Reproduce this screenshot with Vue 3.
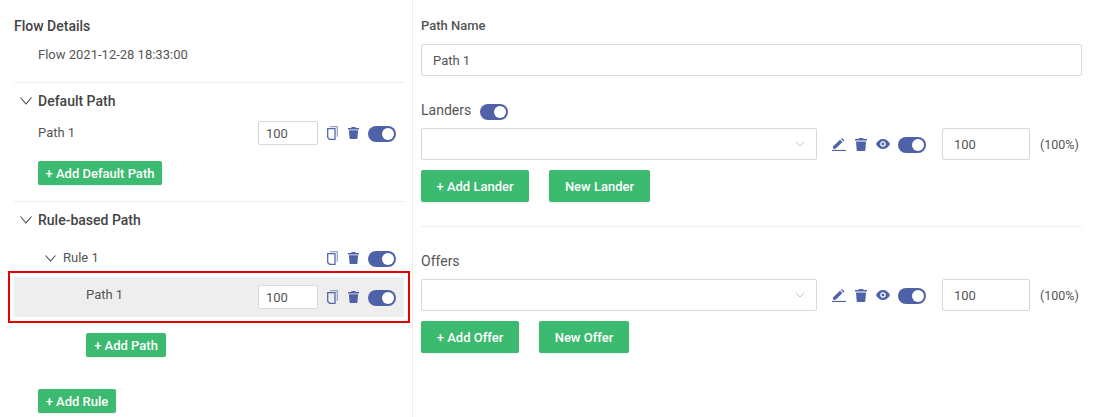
<template>
  <div class="page">
    <!-- left column: flow tree -->
    <div class="side">
      <div class="flow-title">Flow Details</div>
      <div class="flow-name">Flow 2021-12-28 18:33:00</div>

      <div class="section first">
        <div class="sec-head">
          <svg class="chev" width="12" height="8" viewBox="0 0 12 8"><path d="M.5.5L6 7l5.500-6.500" /></svg>
          <span>Default Path</span>
        </div>
        <div class="row path-row">
          <span class="label">Path 1</span>
          <input class="num" value="100" />
          <svg class="ico copy" width="11" height="14" viewBox="0 0 11 14">
            <path class="back" d="M3 .7h7.300v10" />
            <path d="M.7 2.600h7.300v10.700H2.600L.7 11.400z" />
          </svg>
          <svg class="ico" width="11" height="12" viewBox="0 0 12 13">
            <path class="fill" d="M4 0h4l.6 1H12v1.600H0V1h3.400zM1 3.600h10l-.7 8.600q-.1.800-1 .8H2.700q-.9 0-1-.8z" />
          </svg>
          <span class="switch"><i></i></span>
        </div>
        <button class="btn small add-default">+ Add Default Path</button>
      </div>

      <div class="section">
        <div class="sec-head">
          <svg class="chev" width="12" height="8" viewBox="0 0 12 8"><path d="M.5.5L6 7l5.500-6.500" /></svg>
          <span>Rule-based Path</span>
        </div>
        <div class="row rule-row">
          <svg class="chev small-chev" width="11" height="7" viewBox="0 0 11 7"><path d="M.5.5L5.500 6l5-5.500" /></svg>
          <span class="label">Rule 1</span>
          <svg class="ico copy" width="11" height="14" viewBox="0 0 11 14">
            <path class="back" d="M3 .7h7.300v10" />
            <path d="M.7 2.600h7.300v10.700H2.600L.7 11.400z" />
          </svg>
          <svg class="ico" width="11" height="12" viewBox="0 0 12 13">
            <path class="fill" d="M4 0h4l.6 1H12v1.600H0V1h3.400zM1 3.600h10l-.7 8.600q-.1.800-1 .8H2.700q-.9 0-1-.8z" />
          </svg>
          <span class="switch"><i></i></span>
        </div>
        <div class="row selected">
          <span class="label">Path 1</span>
          <input class="num" value="100" />
          <svg class="ico copy" width="11" height="14" viewBox="0 0 11 14">
            <path class="back" d="M3 .7h7.300v10" />
            <path d="M.7 2.600h7.300v10.700H2.600L.7 11.400z" />
          </svg>
          <svg class="ico" width="11" height="12" viewBox="0 0 12 13">
            <path class="fill" d="M4 0h4l.6 1H12v1.600H0V1h3.400zM1 3.600h10l-.7 8.600q-.1.800-1 .8H2.700q-.9 0-1-.8z" />
          </svg>
          <span class="switch"><i></i></span>
        </div>
        <button class="btn small add-path">+ Add Path</button>
        <button class="btn small add-rule">+ Add Rule</button>
      </div>
    </div>

    <!-- right column: path form -->
    <div class="main">
      <div class="field-title">Path Name</div>
      <input class="text" value="Path 1" />

      <div v-for="g in groups" :key="g.name" class="group" :class="g.cls">
        <div class="group-head">
          <span>{{ g.name }}</span>
          <span v-if="g.toggle" class="switch"><i></i></span>
        </div>
        <div class="pick-row">
          <div class="select">
            <svg width="10" height="6" viewBox="0 0 10 6"><path d="M.7.7L5 5l4.300-4.300" /></svg>
          </div>
          <svg class="ico pencil" width="14" height="13" viewBox="0 0 14 13">
            <path class="fill" d="M1 10.800V8.400L8 1.700l2.500 2.400-6.900 6.700zM9 .9L10 0l2.500 2.400-1 1z" />
            <path class="fill" d="M0 11.900h14V13H0z" />
          </svg>
          <svg class="ico" width="12" height="13" viewBox="0 0 12 13">
            <path class="fill" d="M4 0h4l.6 1H12v1.600H0V1h3.400zM1 3.600h10l-.7 8.600q-.1.800-1 .8H2.700q-.9 0-1-.8z" />
          </svg>
          <svg class="ico eye" width="14" height="10" viewBox="0 0 14 10">
            <path class="fill" fill-rule="evenodd" d="M7 0c3.200 0 5.700 2.100 7 5-1.300 2.900-3.800 5-7 5S1.300 7.900 0 5c1.300-2.900 3.800-5 7-5zm0 2.300a2.700 2.700 0 100 5.400 2.700 2.700 0 000-5.400zM7 3.600a1.400 1.400 0 110 2.800 1.400 1.400 0 010-2.800z" />
          </svg>
          <span class="switch"><i></i></span>
          <input class="weight" value="100" />
          <span class="pct">(100%)</span>
        </div>
        <div class="btns">
          <button class="btn" :style="{ width: g.addW + 'px' }">{{ g.add }}</button>
          <button class="btn" :style="{ width: g.newW + 'px' }">{{ g.create }}</button>
        </div>
      </div>
    </div>
  </div>
</template>

<script setup>
const groups = [
  { name: "Landers", cls: "landers", toggle: true, add: "+ Add Lander", create: "New Lander", addW: 108, newW: 101 },
  { name: "Offers", cls: "offers", toggle: false, add: "+ Add Offer", create: "New Offer", addW: 98, newW: 90 },
];
</script>

<style>
html,
body {
  margin: 0;
  background: #fff;
  overflow: hidden;
}
</style>

<style scoped>
.page {
  display: flex;
  width: 1095px;
  height: 417px;
  overflow: hidden;
  font-family: Roboto, "Liberation Sans", sans-serif;
  font-size: 13px;
  color: #555;
}
.side {
  box-sizing: border-box;
  width: 413px;
  height: 417px;
  padding: 0 8px 0 14px;
  border-right: 1px solid #eee;
}
.flow-title {
  margin-top: 18px;
  height: 16px;
  line-height: 16px;
  font-size: 14px;
  font-weight: 500;
  color: #444;
}
.flow-name {
  margin: 13px 0 0 24px;
  height: 16px;
  line-height: 16px;
}
.section {
  border-top: 1px solid #eee;
}
.section.first {
  margin-top: 19px;
  height: 118px;
}
.sec-head {
  display: flex;
  align-items: center;
  height: 16px;
  padding-top: 10px;
  line-height: 16px;
  font-size: 14px;
  font-weight: 500;
  color: #444;
}
.chev {
  margin: 0 6px 0 6px;
}
.chev path {
  fill: none;
  stroke: #444;
  stroke-width: 1.1;
}
.row {
  display: flex;
  align-items: center;
}
.path-row {
  height: 24px;
  margin-top: 12px;
  padding: 0 8px 0 24px;
}
.label {
  flex: 1;
  position: relative;
  top: -1px;
}
.num {
  box-sizing: border-box;
  width: 60px;
  height: 24px;
  padding: 0 7px;
  border: 1px solid #d9d9d9;
  border-radius: 2px;
  background: #fff;
  font: 13px Roboto, sans-serif;
  color: #555;
  outline: none;
}
.ico {
  flex: none;
}
.ico path {
  fill: none;
  stroke: #5668ab;
  stroke-width: 1.3;
}
.ico path.back {
  stroke: #98a4d0;
}
.ico path.fill {
  fill: #4f62a8;
  stroke: none;
}
.copy {
  margin-left: 9px;
  margin-right: 10px;
}
.switch {
  flex: none;
  position: relative;
  display: inline-block;
  width: 28px;
  height: 16px;
  margin-left: 9px;
  border-radius: 8px;
  background: #4f62a8;
}
.row .switch,
.pick-row .switch {
  top: 1px;
}
.switch i {
  position: absolute;
  top: 2px;
  right: 2px;
  width: 12px;
  height: 12px;
  border-radius: 50%;
  background: #fff;
}
.btn {
  display: block;
  box-sizing: border-box;
  height: 32px;
  padding: 0;
  border: 0;
  border-radius: 2px;
  background: #3cba6f;
  box-shadow: 0 1px 2px rgba(0, 0, 0, 0.08);
  font: 500 13px Roboto, sans-serif;
  color: #fff;
}
.btn.small {
  height: 24px;
}
.add-default {
  width: 124px;
  margin: 16px 0 0 24px;
}
.rule-row {
  height: 16px;
  margin-top: 22px;
  padding: 0 8px 0 24px;
}
.small-chev {
  margin: 0 7px 0 7px;
}
.rule-row .copy {
  margin-left: 0;
}
.selected {
  height: 40px;
  margin-top: 11px;
  padding: 0 8px 0 72px;
  background: #eee;
  outline: 2px solid #e60000;
  outline-offset: 4px;
}
.selected .label {
  top: -3px;
}
.add-path {
  width: 80px;
  margin: 16px 0 0 72px;
}
.add-rule {
  width: 78px;
  margin: 32px 0 0 24px;
}
.main {
  box-sizing: border-box;
  width: 669px;
  padding-left: 8px;
}
.field-title {
  margin-top: 18px;
  height: 16px;
  line-height: 16px;
  font-weight: 500;
  color: #555;
}
.text {
  display: block;
  box-sizing: border-box;
  width: 661px;
  height: 32px;
  margin-top: 10px;
  padding: 0 11px;
  border: 1px solid #d9d9d9;
  border-radius: 2px;
  font: 13px Roboto, sans-serif;
  color: #555;
  outline: none;
}
.group {
  width: 661px;
}
.landers {
  margin-top: 25px;
  height: 125px;
  border-bottom: 1px solid #eee;
}
.offers {
  margin-top: 25px;
}
.group-head {
  display: flex;
  align-items: center;
  height: 18px;
  font-size: 14px;
  color: #555;
}
.group-head .switch {
  top: 2px;
  margin-left: 9px;
}
.pick-row {
  display: flex;
  align-items: center;
  height: 32px;
  margin-top: 9px;
}
.select {
  box-sizing: border-box;
  display: flex;
  align-items: center;
  justify-content: flex-end;
  width: 396px;
  height: 32px;
  padding-right: 11px;
  border: 1px solid #d9d9d9;
  border-radius: 2px;
}
.select path {
  fill: none;
  stroke: #c4c4c4;
  stroke-width: 1;
}
.pencil {
  margin: 0 9px 0 15px;
}
.eye {
  margin-left: 9px;
}
.pick-row .switch {
  margin-left: 8px;
}
.weight {
  box-sizing: border-box;
  width: 88px;
  height: 32px;
  margin-left: 16px;
  padding: 0 11px;
  border: 1px solid #d9d9d9;
  border-radius: 2px;
  font: 13px Roboto, sans-serif;
  color: #555;
  outline: none;
}
.pct {
  margin-left: 10px;
  font-size: 12.5px;
}
.btns {
  display: flex;
  gap: 20px;
  margin-top: 10px;
}
</style>
